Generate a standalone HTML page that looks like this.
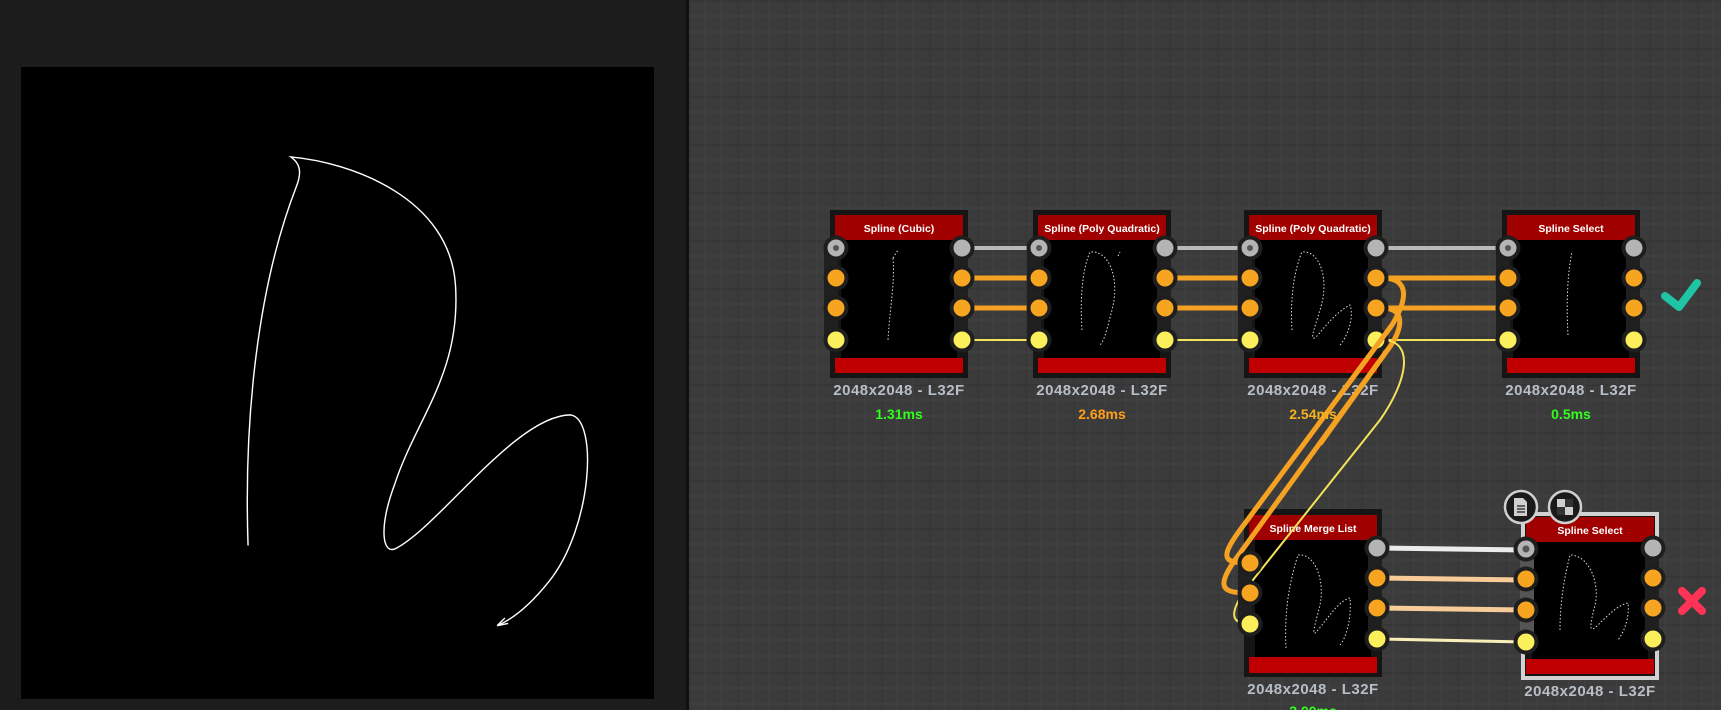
<!DOCTYPE html>
<html><head><meta charset="utf-8"><style>
html,body{margin:0;padding:0;width:1721px;height:710px;overflow:hidden;background:#3b3b3b}
svg{display:block}
text{font-family:"Liberation Sans","DejaVu Sans",sans-serif;font-weight:bold}
</style></head><body>
<svg width="1721" height="710" viewBox="0 0 1721 710" xmlns="http://www.w3.org/2000/svg">
<defs>
<pattern id="g" width="48" height="48" patternUnits="userSpaceOnUse" x="689" y="0">
<rect width="48" height="48" fill="#3b3b3b"/>
<rect x="0" y="0" width="48" height="2" fill="#363636"/>
<rect x="0" y="0" width="2" height="48" fill="#373737"/>
<path d="M16 0V48M32 0V48M0 16H48M0 32H48" stroke="#434343" stroke-width="1"/>
</pattern>
<g id="pl">
<circle r="12.5" fill="#202020"/>
</g>
</defs>
<rect x="0" y="0" width="689" height="710" fill="#1c1c1c"/>
<rect x="686" y="0" width="3" height="710" fill="#111"/>
<rect x="689" y="0" width="1032" height="710" fill="url(#g)"/>
<rect x="21" y="67" width="633" height="632" fill="#000"/>
<g transform="scale(1.0976)" fill="none" stroke="#fff" stroke-width="1.3">
<path d="M226,497 C222,380 235,260 270,170 C276,155 272,148 265,143 C320,148 410,180 415,260 C420,340 380,380 360,440 C345,480 348,505 360,500 C400,480 470,378 520,378 C545,382 540,480 500,530 C480,555 465,565 453,570"/>
<path d="M453,570 L460,563 M453,570 L463,568"/>
</g>

<!-- top wires -->
<g fill="none">
<g stroke="#b9b9b9" stroke-width="4"><path d="M962 248H1039M1165 248H1250M1376 248H1508"/></g>
<g stroke="#f5a223" stroke-width="5"><path d="M962 278H1039M1165 278H1250M1376 278H1508M962 308H1039M1165 308H1250M1376 308H1508"/></g>
<g stroke="#f3e35a" stroke-width="2"><path d="M962 340H1039M1165 340H1250M1376 340H1508"/></g>
</g>

<!-- nodes -->
<g id="nodes">
<!-- node template drawn inline -->
</g>
<g font-size="10.5" text-anchor="middle" fill="#fff">
<!-- Node1 -->
<rect x="830" y="210" width="138" height="168" fill="#151515"/>
<rect x="835" y="215" width="128" height="25" fill="#a00000"/>
<rect x="841" y="240" width="116" height="118" fill="#000"/>
<rect x="835" y="358" width="128" height="15" fill="#c00000"/>
<text x="899" y="232">Spline (Cubic)</text>
<!-- Node2 -->
<rect x="1033" y="210" width="138" height="168" fill="#151515"/>
<rect x="1038" y="215" width="128" height="25" fill="#a00000"/>
<rect x="1044" y="240" width="116" height="118" fill="#000"/>
<rect x="1038" y="358" width="128" height="15" fill="#c00000"/>
<text x="1102" y="232">Spline (Poly Quadratic)</text>
<!-- Node3 -->
<rect x="1244" y="210" width="138" height="168" fill="#151515"/>
<rect x="1249" y="215" width="128" height="25" fill="#a00000"/>
<rect x="1255" y="240" width="116" height="118" fill="#000"/>
<rect x="1249" y="358" width="128" height="15" fill="#c00000"/>
<text x="1313" y="232">Spline (Poly Quadratic)</text>
<!-- Node4 -->
<rect x="1502" y="210" width="138" height="168" fill="#151515"/>
<rect x="1507" y="215" width="128" height="25" fill="#a00000"/>
<rect x="1513" y="240" width="116" height="118" fill="#000"/>
<rect x="1507" y="358" width="128" height="15" fill="#c00000"/>
<text x="1571" y="232">Spline Select</text>
<!-- Merge -->
<rect x="1244" y="509" width="138" height="168" fill="#151515"/>
<rect x="1249" y="515" width="128" height="25" fill="#a00000"/>
<rect x="1255" y="540" width="116" height="117" fill="#000"/>
<rect x="1249" y="657" width="128" height="16" fill="#c00000"/>
<text x="1313" y="532">Spline Merge List</text>
<!-- Select2 -->
<rect x="1521" y="512" width="138" height="168" fill="#d2d2d2"/>
<rect x="1525" y="516" width="130" height="160" fill="#151515"/>
<rect x="1526" y="517" width="128" height="25" fill="#a00000"/>
<rect x="1532" y="542" width="116" height="117" fill="#000"/>
<rect x="1526" y="659" width="128" height="15" fill="#c00000"/>
<text x="1590" y="534">Spline Select</text>
</g>

<!-- thumbnails -->
<g fill="none" stroke="#ddd" stroke-width="1" stroke-dasharray="1.5 2">
<path d="M893 258C895 285 890 305 888 340M893 258L898 250"/>
<path d="M1082 330C1080 300 1082 270 1090 252C1110 250 1120 280 1112 310C1108 325 1105 340 1100 345M1118 256L1120 252"/>
<path d="M1292 330C1290 300 1294 270 1302 252C1320 250 1330 280 1320 310C1314 330 1308 345 1318 335C1330 320 1340 310 1350 305C1355 320 1345 340 1340 345"/>
<path d="M1568 335C1566 300 1568 270 1572 252"/>
<path d="M1286 648C1284 610 1290 580 1298 555C1315 553 1325 580 1320 605C1315 625 1310 640 1318 630C1330 615 1340 600 1350 598C1352 620 1345 640 1340 645"/>
<path d="M1560 630C1560 600 1565 575 1570 555C1590 555 1600 585 1595 605C1590 625 1588 635 1598 625C1608 615 1618 605 1628 603C1630 620 1622 635 1618 640"/>
</g>

<!-- bottom wires -->
<g fill="none">
<path d="M1382 548L1526 550" stroke="#ececec" stroke-width="5"/>
<path d="M1382 578L1526 580M1382 608L1526 610" stroke="#f8cc98" stroke-width="5"/>
<path d="M1382 639L1526 642" stroke="#f8efb8" stroke-width="3"/>
</g>

<!-- cross wires -->
<g fill="none">
<path d="M1382,278 C1412,278 1406,302 1392,325 L1240,530 C1218,560 1225,563 1250,563" stroke="#f5a223" stroke-width="5"/>
<path d="M1382,308 C1408,308 1402,332 1386,352 L1235,560 C1214,590 1225,593 1250,593" stroke="#f5a223" stroke-width="5"/>
<path d="M1382,340 C1415,340 1408,380 1380,420 L1245,590 C1228,615 1232,624 1250,624" stroke="#f3e35a" stroke-width="2"/>
</g>

<!-- ports -->
<g>
<g fill="#202020">
<rect x="824" y="240" width="14" height="108" rx="7"/><rect x="954" y="240" width="14" height="108" rx="7"/>
<rect x="1027" y="240" width="14" height="108" rx="7"/><rect x="1157" y="240" width="14" height="108" rx="7"/>
<rect x="1238" y="240" width="14" height="108" rx="7"/><rect x="1368" y="240" width="14" height="108" rx="7"/>
<rect x="1496" y="240" width="14" height="108" rx="7"/><rect x="1626" y="240" width="14" height="108" rx="7"/>
<rect x="1238" y="555" width="14" height="77" rx="7"/><rect x="1368" y="540" width="14" height="107" rx="7"/>
<rect x="1520" y="541" width="14" height="109" rx="7" fill="#555"/><rect x="1645" y="540" width="14" height="107" rx="7"/>
</g>
<g fill="#1e1e1e">
<circle cx="836" cy="248" r="12.5"/><circle cx="836" cy="278" r="12.5"/><circle cx="836" cy="308" r="12.5"/><circle cx="836" cy="340" r="12.5"/>
<circle cx="962" cy="248" r="12.5"/><circle cx="962" cy="278" r="12.5"/><circle cx="962" cy="308" r="12.5"/><circle cx="962" cy="340" r="12.5"/>
<circle cx="1039" cy="248" r="12.5"/><circle cx="1039" cy="278" r="12.5"/><circle cx="1039" cy="308" r="12.5"/><circle cx="1039" cy="340" r="12.5"/>
<circle cx="1165" cy="248" r="12.5"/><circle cx="1165" cy="278" r="12.5"/><circle cx="1165" cy="308" r="12.5"/><circle cx="1165" cy="340" r="12.5"/>
<circle cx="1250" cy="248" r="12.5"/><circle cx="1250" cy="278" r="12.5"/><circle cx="1250" cy="308" r="12.5"/><circle cx="1250" cy="340" r="12.5"/>
<circle cx="1376" cy="248" r="12.5"/><circle cx="1376" cy="278" r="12.5"/><circle cx="1376" cy="308" r="12.5"/><circle cx="1376" cy="340" r="12.5"/>
<circle cx="1508" cy="248" r="12.5"/><circle cx="1508" cy="278" r="12.5"/><circle cx="1508" cy="308" r="12.5"/><circle cx="1508" cy="340" r="12.5"/>
<circle cx="1634" cy="248" r="12.5"/><circle cx="1634" cy="278" r="12.5"/><circle cx="1634" cy="308" r="12.5"/><circle cx="1634" cy="340" r="12.5"/>
<circle cx="1250" cy="563" r="12.5"/><circle cx="1250" cy="593" r="12.5"/><circle cx="1250" cy="624" r="12.5"/>
<circle cx="1377" cy="548" r="12.5"/><circle cx="1377" cy="578" r="12.5"/><circle cx="1377" cy="608" r="12.5"/><circle cx="1377" cy="639" r="12.5"/>
<circle cx="1526" cy="549" r="12.5"/><circle cx="1526" cy="579" r="12.5"/><circle cx="1526" cy="610" r="12.5"/><circle cx="1526" cy="642" r="12.5"/>
<circle cx="1653" cy="548" r="12.5"/><circle cx="1653" cy="578" r="12.5"/><circle cx="1653" cy="608" r="12.5"/><circle cx="1653" cy="639" r="12.5"/>
</g>
<g fill="#b4b4b4">
<circle cx="836" cy="248" r="8.5"/><circle cx="962" cy="248" r="8.5"/><circle cx="1039" cy="248" r="8.5"/><circle cx="1165" cy="248" r="8.5"/>
<circle cx="1250" cy="248" r="8.5"/><circle cx="1376" cy="248" r="8.5"/><circle cx="1508" cy="248" r="8.5"/><circle cx="1634" cy="248" r="8.5"/>
<circle cx="1377" cy="548" r="8.5"/><circle cx="1526" cy="549" r="8.5"/><circle cx="1653" cy="548" r="8.5"/>
</g>
<g fill="#555"><circle cx="836" cy="248" r="3"/><circle cx="1039" cy="248" r="3"/><circle cx="1250" cy="248" r="3"/><circle cx="1508" cy="248" r="3"/><circle cx="1526" cy="549" r="3.5"/></g>
<g fill="#f7a421">
<circle cx="836" cy="278" r="8.5"/><circle cx="836" cy="308" r="8.5"/><circle cx="962" cy="278" r="8.5"/><circle cx="962" cy="308" r="8.5"/>
<circle cx="1039" cy="278" r="8.5"/><circle cx="1039" cy="308" r="8.5"/><circle cx="1165" cy="278" r="8.5"/><circle cx="1165" cy="308" r="8.5"/>
<circle cx="1250" cy="278" r="8.5"/><circle cx="1250" cy="308" r="8.5"/><circle cx="1376" cy="278" r="8.5"/><circle cx="1376" cy="308" r="8.5"/>
<circle cx="1508" cy="278" r="8.5"/><circle cx="1508" cy="308" r="8.5"/><circle cx="1634" cy="278" r="8.5"/><circle cx="1634" cy="308" r="8.5"/>
<circle cx="1250" cy="563" r="8.5"/><circle cx="1250" cy="593" r="8.5"/>
<circle cx="1377" cy="578" r="8.5"/><circle cx="1377" cy="608" r="8.5"/>
<circle cx="1526" cy="579" r="8.5"/><circle cx="1526" cy="610" r="8.5"/>
<circle cx="1653" cy="578" r="8.5"/><circle cx="1653" cy="608" r="8.5"/>
</g>
<g fill="#fbef5c">
<circle cx="836" cy="340" r="8.5"/><circle cx="962" cy="340" r="8.5"/><circle cx="1039" cy="340" r="8.5"/><circle cx="1165" cy="340" r="8.5"/>
<circle cx="1250" cy="340" r="8.5"/><circle cx="1376" cy="340" r="8.5"/><circle cx="1508" cy="340" r="8.5"/><circle cx="1634" cy="340" r="8.5"/>
<circle cx="1250" cy="624" r="8.5"/><circle cx="1377" cy="639" r="8.5"/><circle cx="1526" cy="642" r="8.5"/><circle cx="1653" cy="639" r="8.5"/>
</g>
</g>

<!-- labels -->
<g font-size="15" text-anchor="middle" fill="#b7bec6" letter-spacing="0.5">
<text x="899" y="395">2048x2048 - L32F</text>
<text x="1102" y="395">2048x2048 - L32F</text>
<text x="1313" y="395">2048x2048 - L32F</text>
<text x="1571" y="395">2048x2048 - L32F</text>
<text x="1313" y="694">2048x2048 - L32F</text>
<text x="1590" y="696">2048x2048 - L32F</text>
</g>
<g font-size="14" text-anchor="middle">
<text x="899" y="419" fill="#33ff1e">1.31ms</text>
<text x="1102" y="419" fill="#ff9f1a">2.68ms</text>
<text x="1313" y="419" fill="#f7b21e">2.54ms</text>
<text x="1571" y="419" fill="#33ff1e">0.5ms</text>
<text x="1313" y="716" fill="#33ff1e">2.00ms</text>
</g>
<!-- redraw cross wires over label area -->
<g fill="none">
<path d="M1392,325 L1340,395" stroke="#f5a223" stroke-width="5"/>
<path d="M1386,352 L1320,444" stroke="#f5a223" stroke-width="5"/>
</g>

<!-- check -->
<path d="M1665 296L1679 307L1697 283" fill="none" stroke="#1fc4a4" stroke-width="8" stroke-linecap="round" stroke-linejoin="round"/>
<!-- X -->
<path d="M1682 591L1702 611M1702 591L1682 611" stroke="#ff3355" stroke-width="8" stroke-linecap="round"/>

<!-- icons -->
<circle cx="1521" cy="507" r="16" fill="#1a1a1a" stroke="#cfcfcf" stroke-width="2.5"/>
<circle cx="1565" cy="507" r="16" fill="#1a1a1a" stroke="#cfcfcf" stroke-width="2.5"/>
<path d="M1514 498h9l4 4v14h-13z" fill="#cfcfcf"/>
<path d="M1517 506h8M1517 509h8M1517 512h8" stroke="#1a1a1a" stroke-width="1.3"/>
<rect x="1557" y="499" width="8" height="8" fill="#cfcfcf"/>
<rect x="1565" y="507" width="8" height="8" fill="#cfcfcf"/>
<rect x="1565" y="499" width="8" height="8" fill="#333"/>
<rect x="1557" y="507" width="8" height="8" fill="#333"/>
</svg>
</body></html>
